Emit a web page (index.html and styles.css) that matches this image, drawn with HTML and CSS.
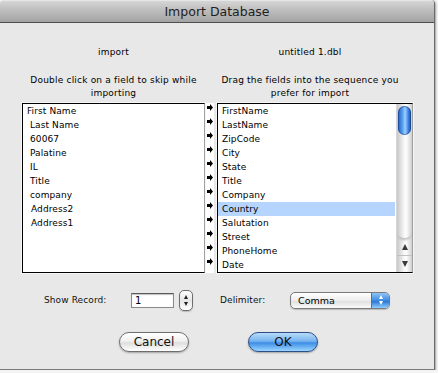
FILE: index.html
```html
<!DOCTYPE html>
<html lang="en">
<head>
    <meta charset="UTF-8">
    <title>Import Database</title>
    <link rel="stylesheet" href="styles.css">
</head>
<body>

<div class="window">
    <div class="titlebar">Import Database</div>

    <div class="content">
        <div class="columns">
            <div class="col-head">
                <div class="file-name">import</div>
                <div class="hint">Double click on a field to skip while<br>importing</div>
            </div>
            <div></div>
            <div class="col-head right-head">
                <div class="file-name">untitled 1.dbl</div>
                <div class="hint">Drag the fields into the sequence you<br>prefer for import</div>
            </div>

            <ul class="list source">
                <li class="first">First Name</li>
                <li>Last Name</li>
                <li>60067</li>
                <li>Palatine</li>
                <li>IL</li>
                <li>Title</li>
                <li>company</li>
                <li class="wide">Address2</li>
                <li class="wide">Address1</li>
                <li></li>
                <li></li>
                <li></li>
            </ul>

            <ul class="arrows">
                <li></li><li></li><li></li><li></li><li></li><li></li>
                <li></li><li></li><li></li><li></li><li></li><li></li>
            </ul>

            <div class="target">
                <ul class="list">
                    <li>FirstName</li>
                    <li>LastName</li>
                    <li>ZipCode</li>
                    <li>City</li>
                    <li>State</li>
                    <li>Title</li>
                    <li>Company</li>
                    <li class="selected">Country</li>
                    <li>Salutation</li>
                    <li>Street</li>
                    <li>PhoneHome</li>
                    <li>Date</li>
                </ul>
                <div class="scrollbar">
                    <div class="track"><div class="thumb"></div></div>
                    <div class="scroll-btn up"></div>
                    <div class="scroll-btn down"></div>
                </div>
            </div>
        </div>

        <div class="options">
            <span class="label record-label">Show Record:</span>
            <input class="record-input" type="text" value="1">
            <div class="stepper"><span class="tri up"></span><span class="tri down"></span></div>
            <span class="label delim-label">Delimiter:</span>
            <div class="popup">
                <span class="popup-text">Comma</span>
                <span class="popup-arrows"><span class="tri up white"></span><span class="tri down white"></span></span>
            </div>
        </div>

        <div class="buttons">
            <button class="btn">Cancel</button>
            <button class="btn default">OK</button>
        </div>
    </div>
</div>

</body>
</html>
```

FILE: styles.css
```css
body {
    margin: 0;
    background: #f4f4f4;
    font-family: "DejaVu Sans", Verdana, sans-serif;
    font-size: 9px;
    color: #000;
}
ul {
    list-style: none;
    margin: 0;
    padding: 0;
}
.window {
    width: 434px;
    height: 369px;
    background: #e8e8e8;
    border-right: 1px solid #6a6a6a;
    border-bottom: 1px solid #7a7a7a;
    border-radius: 4px 4px 0 0;
    box-shadow: 1px 1px 2px rgba(0, 0, 0, 0.35);
    overflow: hidden;
}
.titlebar {
    box-sizing: border-box;
    height: 23px;
    line-height: 21px;
    text-align: center;
    font-size: 12.5px;
    color: #1e1e1e;
    background: linear-gradient(#d6d6d6, #c4c4c4 30%, #a3a3a3);
    border-top: 1px solid #e6e6e6;
    border-bottom: 1px solid #4e4e4e;
}
.content {
    padding-left: 22px;
}
.columns {
    display: grid;
    grid-template-columns: 183px 12px 196px;
}
.col-head {
    text-align: center;
    line-height: 13px;
    letter-spacing: 0.2px;
    padding-top: 23px;
    padding-bottom: 3px;
}
.right-head {
    padding-right: 10px;
}
.hint {
    margin-top: 15px;
}
.list {
    background: #fff;
    border: 1px solid #000;
    box-shadow: 0 0 0 1px #f6f6f6;
}
.list li {
    height: 14px;
    line-height: 14px;
    padding-left: 8px;
    white-space: nowrap;
    letter-spacing: 0.1px;
}
.source {
    border-right-color: #a0a0a0;
}
.source li {
    padding-left: 7px;
}
.source li.first {
    padding-left: 4px;
}
.source li.wide {
    padding-left: 8px;
}
.arrows {
    background: #fff;
    margin: 0 3px 0 1px;
    padding-top: 1px;
}
.arrows li {
    height: 14px;
    padding-left: 1px;
}
.arrows li::after {
    content: "";
    display: block;
    width: 6px;
    height: 7px;
    background: #000;
    clip-path: polygon(0 30%, 50% 30%, 50% 0, 100% 50%, 50% 100%, 50% 70%, 0 70%);
}
.target {
    display: flex;
    border: 1px solid #000;
    border-right-color: #a0a0a0;
    box-shadow: 0 0 0 1px #f6f6f6;
    background: #fff;
}
.target .list {
    flex: 1;
    border: none;
    box-shadow: none;
    padding-right: 1px;
}
.target .list li {
    padding-left: 4px;
}
.target .list li.selected {
    background: #b5d5ff;
}
.scrollbar {
    width: 15px;
    display: flex;
    flex-direction: column;
    background: linear-gradient(90deg, #c8c8c8, #f4f4f4 45%, #fff 60%, #d0d0d0);
    border-left: 1px solid #d8d8d8;
}
.track {
    flex: 1;
    padding: 2px 1px 0;
    border-bottom: 1px solid #c0c0c0;
    border-radius: 0 0 7px 7px;
    box-shadow: 0 3px 3px -2px rgba(0, 0, 0, 0.25);
}
.thumb {
    height: 29px;
    border-radius: 7px;
    background: linear-gradient(90deg, #1f5fc4, #5aa0f0 35%, #9dd0ff 55%, #3b7fe0 80%, #1b4fa8);
    box-shadow: inset 0 0 0 1px rgba(20, 50, 120, 0.5);
}
.scroll-btn {
    height: 16px;
    display: flex;
    align-items: center;
    justify-content: center;
}
.scroll-btn.up {
    border-bottom: 1px solid #c0c0c0;
}
.scroll-btn::after {
    content: "";
    border-left: 3px solid transparent;
    border-right: 3px solid transparent;
}
.scroll-btn.up::after {
    border-bottom: 6px solid #3a3a3a;
}
.scroll-btn.down::after {
    border-top: 6px solid #3a3a3a;
}
.options {
    display: flex;
    align-items: center;
    height: 22px;
    margin-top: 16px;
    padding-left: 22px;
}
.label {
    color: #111;
    letter-spacing: 0.1px;
}
.record-label {
    width: 87px;
}
.record-input {
    box-sizing: border-box;
    width: 43px;
    height: 15px;
    border: 1px solid #8a8a8a;
    border-top-color: #5a5a5a;
    box-shadow: inset 0 1px 1px rgba(0, 0, 0, 0.25);
    font-family: "DejaVu Sans", sans-serif;
    font-size: 10px;
    padding: 0 3px;
    margin: 0;
}
.stepper {
    box-sizing: border-box;
    width: 14px;
    height: 21px;
    margin-left: 5px;
    border: 1px solid #6e6e6e;
    border-radius: 5px;
    background: linear-gradient(#fff, #e6e6e6 50%, #fff);
    display: flex;
    flex-direction: column;
    align-items: center;
    justify-content: center;
    gap: 3px;
    box-shadow: 0 1px 1px rgba(0, 0, 0, 0.2);
}
.tri {
    width: 0;
    height: 0;
    border-left: 2.5px solid transparent;
    border-right: 2.5px solid transparent;
}
.tri.up {
    border-bottom: 4px solid #222;
}
.tri.down {
    border-top: 4px solid #222;
}
.tri.up.white {
    border-bottom-color: #fff;
}
.tri.down.white {
    border-top-color: #fff;
}
.delim-label {
    margin-left: 27px;
    width: 70px;
}
.popup {
    box-sizing: border-box;
    width: 100px;
    height: 17px;
    display: flex;
    border: 1px solid #7a7a7a;
    border-radius: 5px;
    overflow: hidden;
    background: linear-gradient(#fff, #ededed 50%, #e0e0e0 55%, #fafafa);
    box-shadow: 0 1px 1px rgba(0, 0, 0, 0.2);
}
.popup-text {
    flex: 1;
    padding-left: 7px;
    line-height: 15px;
    font-size: 9.5px;
}
.popup-arrows {
    width: 17px;
    display: flex;
    flex-direction: column;
    align-items: center;
    justify-content: center;
    gap: 2px;
    background: linear-gradient(#8ec4f7, #3d8be0 50%, #2a74d0 55%, #8fd0ff);
    border-left: 1px solid #4a72a8;
}
.buttons {
    display: flex;
    gap: 59px;
    margin-top: 21px;
    padding-left: 97px;
}
.btn {
    box-sizing: border-box;
    width: 70px;
    height: 20px;
    border-radius: 10px;
    border: 1px solid #6e6e6e;
    background: linear-gradient(#ffffff, #f0f0f0 45%, #dedede 55%, #ffffff);
    font-family: "DejaVu Sans", sans-serif;
    font-size: 12px;
    line-height: 17px;
    color: #111;
    padding: 0;
    box-shadow: 0 1px 2px rgba(0, 0, 0, 0.3);
}
.btn.default {
    border-color: #2e4f86;
    background: linear-gradient(#b8dcfb, #78b4f0 45%, #3d8ee6 55%, #9ad6ff);
}
```
